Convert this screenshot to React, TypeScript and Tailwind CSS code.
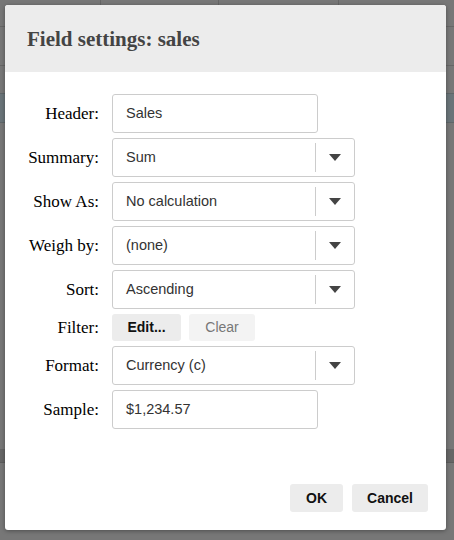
import React from 'react';

const serif = { fontFamily: '"Liberation Serif", "Times New Roman", serif' };
const sans = { fontFamily: '"Liberation Sans", Arial, sans-serif' };

const TextField: React.FC<{ value: string }> = ({ value }) => (
    <div className="h-[39px] w-[206px] rounded-[3px] border border-[#cccccc] bg-white flex items-center pl-[13px] text-[14.5px] text-[#333333]" style={sans}>
        {value}
    </div>
);

const SelectField: React.FC<{ value: string }> = ({ value }) => (
    <div className="h-[39px] w-[243px] rounded-[3px] border border-[#cccccc] bg-white flex items-center text-[14.5px] text-[#333333]" style={sans}>
        <span className="flex-1 pl-[13px]">{value}</span>
        <span className="h-[29px] w-px bg-[#cccccc]" />
        <span className="w-[38px] flex items-center justify-center">
            <svg width="12" height="7" viewBox="0 0 12 7">
                <path d="M0 0 L12 0 L6 7 Z" fill="#444444" />
            </svg>
        </span>
    </div>
);

const Row: React.FC<{ label: string; children: React.ReactNode }> = ({ label, children }) => (
    <>
        <div className="text-right text-[17px] text-black self-center" style={serif}>{label}</div>
        <div className="flex items-center">{children}</div>
    </>
);

const App: React.FC = () => {
    return (
        <div className="relative w-[454px] h-[540px] bg-[#777777] overflow-hidden">
            {/* spreadsheet behind the overlay */}
            <div className="absolute left-[100px] top-0 h-[6px] w-px bg-[#666666]" />
            <div className="absolute left-[218px] top-0 h-[6px] w-px bg-[#666666]" />
            <div className="absolute left-[338px] top-0 h-[6px] w-px bg-[#666666]" />
            <div className="absolute left-0 top-[26px] w-full h-px bg-[#666666]" />
            <div className="absolute left-0 top-[65px] w-full h-px bg-[#666666]" />
            <div className="absolute left-0 top-[93px] w-full h-[30px] bg-[#6a7479] border-y border-[#5f6669]" />
            <div className="absolute left-0 top-[449px] w-full h-[14px] bg-[#666666] border-b border-[#5c5c5c]" />

            <div className="relative m-[5px] w-[441px] h-[525px] bg-white rounded-[3px] shadow-[0_1px_4px_rgba(0,0,0,0.35)] flex flex-col overflow-hidden">
                <div className="h-[67px] bg-[#ececec] flex items-center pl-[22px] pt-[2px]">
                    <h1 className="text-[21px] font-bold text-[#444444]" style={serif}>Field settings: sales</h1>
                </div>

                <div className="grid grid-cols-[94px_1fr] gap-x-[13px] gap-y-[5px] pt-[22px]">
                    <Row label="Header:"><TextField value="Sales" /></Row>
                    <Row label="Summary:"><SelectField value="Sum" /></Row>
                    <Row label="Show As:"><SelectField value="No calculation" /></Row>
                    <Row label="Weigh by:"><SelectField value="(none)" /></Row>
                    <Row label="Sort:"><SelectField value="Ascending" /></Row>
                    <Row label="Filter:">
                        <div className="flex gap-[8px] h-[27px]" style={sans}>
                            <button className="w-[69px] h-[27px] rounded-[3px] bg-[#ececec] text-[14px] font-bold text-[#111111]">Edit...</button>
                            <button className="w-[66px] h-[27px] rounded-[3px] bg-[#f3f3f3] text-[14px] font-normal text-[#777777]">Clear</button>
                        </div>
                    </Row>
                    <Row label="Format:"><SelectField value="Currency (c)" /></Row>
                    <Row label="Sample:"><TextField value="$1,234.57" /></Row>
                </div>

                <div className="mt-auto flex justify-end gap-[9px] pr-[18px] pb-[18px]" style={sans}>
                    <button className="w-[53px] h-[28px] rounded-[3px] bg-[#ececec] text-[14px] font-bold text-[#111111]">OK</button>
                    <button className="w-[76px] h-[28px] rounded-[3px] bg-[#ececec] text-[14px] font-bold text-[#111111]">Cancel</button>
                </div>
            </div>
        </div>
    );
};

export default App;
